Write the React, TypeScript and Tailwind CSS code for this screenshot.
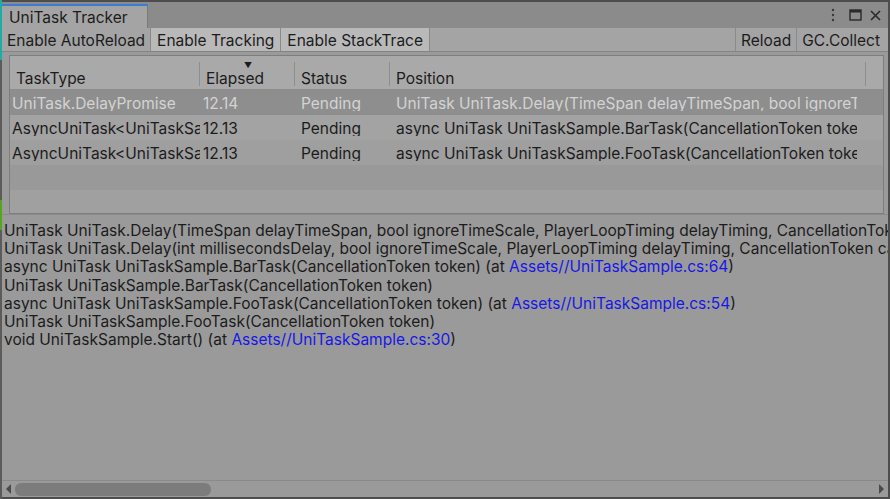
import React from "react";

// UniTask Tracker — Unity editor window (light skin, dimmed)

const rows = [
  {
    type: "UniTask.DelayPromise",
    elapsed: "12.14",
    status: "Pending",
    pos: "UniTask UniTask.Delay(TimeSpan delayTimeSpan, bool ignoreTimeScale, PlayerLoopTiming delayTiming)",
    selected: true,
  },
  {
    type: "AsyncUniTask<UniTaskSample+<BarTask>d__3>",
    elapsed: "12.13",
    status: "Pending",
    pos: "async UniTask UniTaskSample.BarTask(CancellationToken token)",
    selected: false,
  },
  {
    type: "AsyncUniTask<UniTaskSample+<FooTask>d__2>",
    elapsed: "12.13",
    status: "Pending",
    pos: "async UniTask UniTaskSample.FooTask(CancellationToken token)",
    selected: false,
  },
];

const rowBg = ["bg-[#8e8e8e]", "bg-[#a3a3a3]", "bg-[#9f9f9f]", "bg-[#999999]", "bg-[#a0a0a0]"];

const trace: { text: string; link?: string }[] = [
  {
    text: "UniTask UniTask.Delay(TimeSpan delayTimeSpan, bool ignoreTimeScale, PlayerLoopTiming delayTiming, CancellationToken cancellationToken)",
  },
  {
    text: "UniTask UniTask.Delay(int millisecondsDelay, bool ignoreTimeScale, PlayerLoopTiming delayTiming, CancellationToken cancellationToken)",
  },
  {
    text: "async UniTask UniTaskSample.BarTask(CancellationToken token) (at ",
    link: "Assets//UniTaskSample.cs:64",
  },
  { text: "UniTask UniTaskSample.BarTask(CancellationToken token)" },
  {
    text: "async UniTask UniTaskSample.FooTask(CancellationToken token) (at ",
    link: "Assets//UniTaskSample.cs:54",
  },
  { text: "UniTask UniTaskSample.FooTask(CancellationToken token)" },
  { text: "void UniTaskSample.Start() (at ", link: "Assets//UniTaskSample.cs:30" },
];

function ToolButton({ label, on }: { label: string; on?: boolean }) {
  return (
    <div
      className={`flex items-center border-r border-[#8a8a8a] pt-[2px] ${
        on ? "bg-[#b9b9b9] px-[6px]" : "bg-[#a4a4a4] px-[5px]"
      }`}
    >
      {label}
    </div>
  );
}

export default function App() {
  return (
    <div
      className="flex h-[499px] w-[890px] overflow-hidden bg-[#4d4d4d] text-[15.5px] leading-none text-[#1c1c1c]"
      style={{ fontFamily: "Inter, 'Noto Sans', sans-serif" }}
    >
      {/* sliver of the editor behind the window */}
      <div className="flex w-[2px] flex-col">
        <div className="h-[60px] bg-[#2aa7a0]" />
        <div className="h-[140px] bg-[#5b5b5b]" />
        <div className="h-[30px] bg-[#5aa02c]" />
        <div className="flex-1 bg-[#5b5b5b]" />
      </div>

      <div className="flex min-w-0 flex-1 flex-col pt-[2px]">
        {/* tab strip */}
        <div className="flex h-[26px] shrink-0 items-end bg-[#8b8b8b]">
          <div className="flex h-[24px] w-[146px] items-center border-t-2 border-r border-t-[#3d7bd4] border-r-[#7a7a7a] bg-[#a4a4a4] pt-[1px] pl-[7px]">
            UniTask Tracker
          </div>
          <div className="flex-1" />
          <div className="mb-[6px] flex items-center pr-[7px]">
            <svg width="4" height="14" viewBox="0 0 4 14" className="mr-[14px]">
              <circle cx="2" cy="2" r="1.2" fill="#3a3a3a" />
              <circle cx="2" cy="7" r="1.2" fill="#3a3a3a" />
              <circle cx="2" cy="12" r="1.2" fill="#3a3a3a" />
            </svg>
            <svg width="13" height="12" viewBox="0 0 13 12" className="mr-[8px]">
              <rect x="1" y="1" width="11" height="10" fill="none" stroke="#2a2a2a" strokeWidth="1.4" />
              <rect x="1" y="1" width="11" height="2.5" fill="#2a2a2a" />
            </svg>
            <svg width="11" height="11" viewBox="0 0 11 11">
              <path d="M1 1 L10 10 M10 1 L1 10" stroke="#2a2a2a" strokeWidth="1.6" />
            </svg>
          </div>
        </div>

        {/* toolbar */}
        <div className="flex h-[24px] shrink-0 border-b border-[#848484] bg-[#a4a4a4]">
          <ToolButton label="Enable AutoReload" />
          <ToolButton label="Enable Tracking" on />
          <ToolButton label="Enable StackTrace" on />
          <div className="flex-1" />
          <div className="flex items-center border-l border-[#8a8a8a] px-[5px] pt-[2px]">Reload</div>
          <div className="flex items-center border-l border-[#8a8a8a] px-[5px] pt-[2px]">GC.Collect</div>
          <div className="w-[3px]" />
        </div>

        {/* task table */}
        <div className="flex shrink-0 bg-[#9a9a9a] pt-[3px] pr-[4px] pl-[7px]">
          <div className="flex h-[159px] min-w-0 flex-1 flex-col overflow-hidden border border-[#7e7e7e] bg-[#9b9b9b]">
            <div className="flex h-[34px] shrink-0 items-end border-b border-[#8c8c8c] bg-[#a9a9a9] pb-[3px]">
              <HeadCell w="w-[190px]" label="TaskType" />
              <HeadCell w="w-[95px]" label="Elapsed" sort />
              <HeadCell w="w-[95px]" label="Status" />
              <HeadCell w="w-[476px]" label="Position" />
            </div>
            {rows.map((r, i) => (
              <div
                key={i}
                className={`flex h-[25px] shrink-0 items-center whitespace-nowrap pt-[2px] ${rowBg[i]} ${
                  r.selected ? "text-[#d3d3d3]" : ""
                }`}
              >
                <div className="w-[190px] shrink-0 overflow-hidden pl-[2px]">{r.type}</div>
                <div className="w-[95px] shrink-0 overflow-hidden pl-[3px]">{r.elapsed}</div>
                <div className="w-[95px] shrink-0 overflow-hidden pl-[6px]">{r.status}</div>
                <div className="w-[467px] shrink-0 overflow-hidden pl-[6px]">{r.pos}</div>
              </div>
            ))}
            <div className={`h-[25px] shrink-0 ${rowBg[3]}`} />
            <div className={`flex-1 ${rowBg[4]}`} />
          </div>
        </div>

        {/* stack trace */}
        <div className="flex min-h-0 flex-1 flex-col overflow-hidden border-t border-[#8a8a8a] bg-[#9a9a9a] pt-[7px] pl-[2px]">
          {trace.map((t, i) => (
            <div key={i} className="h-[18.2px] shrink-0 whitespace-nowrap leading-[18px]">
              {t.text}
              {t.link && (
                <>
                  <span className="text-[#1717e6]">{t.link}</span>)
                </>
              )}
            </div>
          ))}
        </div>

        {/* horizontal scrollbar */}
        <div className="flex h-[17px] shrink-0 items-center gap-[3px] border-t border-[#8a8a8a] bg-[#9a9a9a] px-[4px]">
          <svg width="6" height="10" viewBox="0 0 6 10">
            <path d="M5 0 L0 5 L5 10 Z" fill="#4a4a4a" />
          </svg>
          <div className="h-[13px] w-[196px] rounded-[6px] bg-[#7c7c7c]" />
          <div className="flex-1" />
          <svg width="6" height="10" viewBox="0 0 6 10">
            <path d="M1 0 L6 5 L1 10 Z" fill="#4a4a4a" />
          </svg>
        </div>
        <div className="h-[2px] shrink-0 bg-[#4d4d4d]" />
      </div>
      <div className="w-[2px] bg-[#4d4d4d]" />
    </div>
  );
}

function HeadCell({ w, label, sort }: { w: string; label: string; sort?: boolean }) {
  return (
    <div className={`relative flex ${w} h-[24px] shrink-0 items-end border-r border-[#8e8e8e] pl-[6px]`}>
      {sort && <span className="absolute top-[-1px] left-[44px] text-[8px] text-[#1c1c1c]">▼</span>}
      <span className="leading-none">{label}</span>
    </div>
  );
}
